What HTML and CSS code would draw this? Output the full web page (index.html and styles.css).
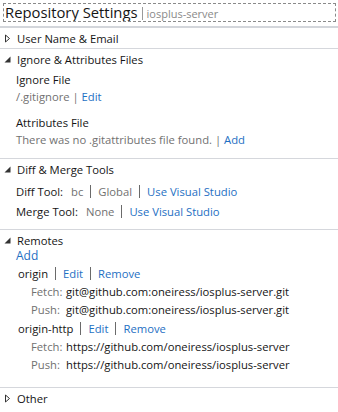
FILE: index.html
```html
<!DOCTYPE html>
<html>
<head>
<meta charset="utf-8">
<link rel="stylesheet" href="styles.css">
</head>
<body>
<div class="panel">
  <div class="header">
    <div class="focus">
      <span class="title">Repository Settings</span>
      <span class="hbar"></span>
      <span class="repo">iosplus-server</span>
    </div>
  </div>

  <section class="sec">
    <div class="sec-head">
      <svg class="tri" width="7" height="9" viewBox="0 0 7 9"><path d="M1.5 1 L5.5 4.5 L1.5 8 Z" fill="none" stroke="#333" stroke-width="1"/></svg>
      <span>User Name &amp; Email</span>
    </div>
  </section>

  <section class="sec sec-files">
    <div class="sec-head">
      <svg class="tri" width="7" height="9" viewBox="0 0 7 9"><path d="M6.5 1.5 L6.5 7.5 L0.5 7.5 Z" fill="#333"/></svg>
      <span>Ignore &amp; Attributes Files</span>
    </div>
    <div class="body">
      <div class="label first">Ignore File</div>
      <div class="value"><span class="muted">/.gitignore |</span> <a class="link">Edit</a></div>
      <div class="label gap">Attributes File</div>
      <div class="value"><span class="muted">There was no .gitattributes file found. |</span> <a class="link">Add</a></div>
    </div>
  </section>

  <section class="sec sec-tools">
    <div class="sec-head">
      <svg class="tri" width="7" height="9" viewBox="0 0 7 9"><path d="M6.5 1.5 L6.5 7.5 L0.5 7.5 Z" fill="#333"/></svg>
      <span>Diff &amp; Merge Tools</span>
    </div>
    <div class="body">
      <div class="tool-row">
        <span class="tool-name">Diff Tool:</span>
        <span class="muted">bc</span>
        <span class="pipe"></span>
        <span class="muted">Global</span>
        <span class="pipe"></span>
        <a class="link">Use Visual Studio</a>
      </div>
      <div class="tool-row">
        <span class="tool-name">Merge Tool:</span>
        <span class="muted">None</span>
        <span class="pipe"></span>
        <a class="link">Use Visual Studio</a>
      </div>
    </div>
  </section>

  <section class="sec sec-remotes">
    <div class="sec-head">
      <svg class="tri" width="7" height="9" viewBox="0 0 7 9"><path d="M6.5 1.5 L6.5 7.5 L0.5 7.5 Z" fill="#333"/></svg>
      <span>Remotes</span>
    </div>
    <div class="body">
      <div class="add-row"><a class="link">Add</a></div>
      <div class="remote">
        <div class="remote-name">
          <span>origin</span>
          <span class="pipe"></span>
          <a class="link">Edit</a>
          <span class="pipe"></span>
          <a class="link">Remove</a>
        </div>
        <div class="url-row"><span class="muted">Fetch:</span><span>git@github.com:oneiress/iosplus-server.git</span></div>
        <div class="url-row"><span class="muted">Push:</span><span>git@github.com:oneiress/iosplus-server.git</span></div>
      </div>
      <div class="remote">
        <div class="remote-name">
          <span>origin-http</span>
          <span class="pipe"></span>
          <a class="link">Edit</a>
          <span class="pipe"></span>
          <a class="link">Remove</a>
        </div>
        <div class="url-row"><span class="muted">Fetch:</span><span>https://github.com/oneiress/iosplus-server</span></div>
        <div class="url-row"><span class="muted">Push:</span><span>https://github.com/oneiress/iosplus-server</span></div>
      </div>
    </div>
  </section>

  <section class="sec sec-last">
    <div class="sec-head">
      <svg class="tri" width="7" height="9" viewBox="0 0 7 9"><path d="M1.5 1 L5.5 4.5 L1.5 8 Z" fill="none" stroke="#333" stroke-width="1"/></svg>
      <span>Other</span>
    </div>
  </section>
</div>
</body>
</html>
```

FILE: styles.css
```css
html, body {
  margin: 0;
  padding: 0;
  background: #ffffff;
}
body {
  font-family: "Open Sans", "Noto Sans", sans-serif;
  font-size: 11.25px;
  color: #151515;
  width: 338px;
  height: 412px;
  overflow: hidden;
}
.panel {
  display: flex;
  flex-direction: column;
}
.header {
  height: 28px;
  box-sizing: border-box;
  padding: 3px 2px 0 3px;
  border-bottom: 2px solid #d3d6db;
}
.focus {
  height: 19px;
  box-sizing: border-box;
  border: 1px dashed #8a8a8a;
  display: flex;
  align-items: center;
  padding-left: 1px;
  gap: 4px;
  overflow: hidden;
}
.title {
  font-size: 14.8px;
  line-height: 17px;
  color: #151515;
}
.hbar {
  width: 1px;
  height: 13px;
  background: #9a9a9a;
  margin-top: 2px;
}
.repo {
  font-size: 11px;
  color: #8a8a8a;
  margin-top: 2px;
}
.sec {
  border-bottom: 1px solid #d5d7dc;
}
.sec-last {
  border-bottom: none;
}
.sec-head {
  display: flex;
  align-items: center;
  height: 20px;
  padding-left: 4px;
  gap: 6px;
}
.tri {
  display: block;
}
.body {
  padding-left: 16px;
}
.label, .value {
  line-height: 17px;
  height: 17px;
}
.label.first {
  margin-top: 2px;
}
.label.gap {
  margin-top: 9px;
}
.sec-files .body {
  padding-bottom: 10px;
}
.muted {
  color: #717171;
}
.link {
  color: #1e6fc3;
  cursor: pointer;
}
.sec-tools .body {
  padding-top: 2px;
  padding-bottom: 8px;
}
.tool-row {
  display: flex;
  align-items: center;
  height: 20px;
  gap: 7px;
}
.tool-name {
  margin-right: 1px;
}
.pipe {
  width: 1px;
  height: 13px;
  background: #6a6a6a;
}
.sec-remotes .body {
  padding-bottom: 13px;
}
.add-row {
  margin-top: -2px;
  line-height: 16px;
  height: 16px;
}
.add-row .link {
  font-size: 12px;
}
.remote-name {
  display: flex;
  align-items: center;
  height: 19px;
  gap: 7px;
  padding-left: 2px;
}
.url-row {
  display: grid;
  grid-template-columns: 35px auto;
  height: 18px;
  line-height: 18px;
  padding-left: 15px;
}
```
